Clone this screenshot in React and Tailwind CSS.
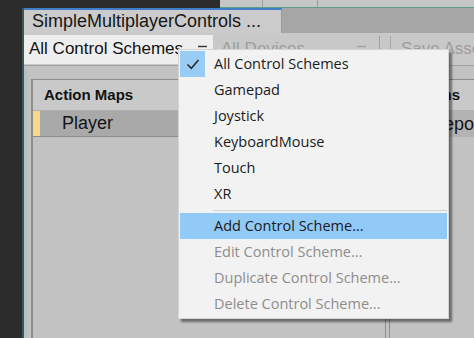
const MENU_ITEMS = [
  { label: 'All Control Schemes', checked: true },
  { label: 'Gamepad' },
  { label: 'Joystick' },
  { label: 'KeyboardMouse' },
  { label: 'Touch' },
  { label: 'XR' },
  { separator: true },
  { label: 'Add Control Scheme...', active: true },
  { label: 'Edit Control Scheme...', disabled: true },
  { label: 'Duplicate Control Scheme...', disabled: true },
  { label: 'Delete Control Scheme...', disabled: true },
]

const ui = { fontFamily: '"Liberation Sans", Arial, sans-serif' }
const menuFont = { fontFamily: '"Open Sans", "Noto Sans", sans-serif' }

function DropArrow({ color = '#333' }) {
  return (
    <svg width="11" height="8" viewBox="0 0 11 8" className="shrink-0">
      <path d="M1 1.5h9" stroke={color} strokeWidth="1.4" />
      <path d="M2 4l3.5 3.5L9 4z" fill={color} />
    </svg>
  )
}

function Check() {
  return (
    <svg width="14" height="12" viewBox="0 0 14 12">
      <path d="M1.5 6.5l3.8 3.8L12.5 2" fill="none" stroke="#2a2a2a" strokeWidth="1.6" />
    </svg>
  )
}

function Menu() {
  return (
    <div
      className="absolute left-[178px] top-[49px] w-[271px] bg-[#f2f2f2] pt-[1px] pb-[1px] px-[1px] shadow-[3px_3px_2px_rgba(0,0,0,0.45)] border border-[#d4d4d4]"
      style={menuFont}
    >
      {MENU_ITEMS.map((item, i) =>
        item.separator ? (
          <div key={i} className="h-[6px] flex items-center pl-[33px]">
            <div className="w-full h-[1px] bg-[#d2d2d2]" />
          </div>
        ) : (
          <div
            key={i}
            className={`h-[26px] flex items-center text-[14.5px] ${item.active ? 'bg-[#91c9f7]' : ''} ${item.disabled ? 'text-[#8d8d8d]' : 'text-[#1b1b1b]'}`}
          >
            <div className={`w-[25px] h-full flex items-center justify-center ${item.checked ? 'bg-[#99ccf5]' : ''}`}>
              {item.checked && <Check />}
            </div>
            <span className="pl-[9px] whitespace-nowrap">{item.label}</span>
          </div>
        )
      )}
    </div>
  )
}

export default function App() {
  return (
    <div className="relative w-[474px] h-[338px] overflow-hidden bg-[#2c2c2c] flex flex-col" style={ui}>
      {/* strip of the window above */}
      <div className="h-[8px] flex shrink-0">
        <div className="w-[220px] bg-[#2c2c2c]" />
        <div className="flex-1 bg-[#c6c6c6] flex border-b border-[#5f9f82] overflow-hidden">
          <div className="w-[43px] border-r border-[#9c9c9c]" />
          <div className="w-[55px] border-r border-[#9c9c9c]" />
          <div className="pl-[30px] -mt-[16px] text-[18px] text-[#111] whitespace-nowrap leading-none">AssetName</div>
        </div>
      </div>

      <div className="flex-1 flex">
        <div className="w-[22px] bg-[#2c2c2c] shrink-0" />
        <div className="flex-1 flex flex-col border-l-[2px] border-[#3b5757]">
          {/* tab bar */}
          <div className="h-[25px] flex shrink-0 bg-[#a6a6a6]">
            <div className="w-[258px] bg-[#cbcbcb] border-t-2 border-[#3e7dc8] border-r border-r-[#9a9a9a] flex items-center pl-[8px] text-[18px] text-[#161616] whitespace-nowrap">
              SimpleMultiplayerControls ...
            </div>
          </div>

          {/* toolbar */}
          <div className="h-[33px] shrink-0 bg-[#c8c8c8] border-b border-[#a3a3a3] flex items-center gap-[4px] text-[17px]">
            <div className="w-[189px] h-[29px] bg-[#eeeeee] flex items-center justify-between pl-[5px] pr-[5px] text-[#121212]">
              <span className="whitespace-nowrap">All Control Schemes</span>
              <DropArrow />
            </div>
            <div className="w-[158px] h-[29px] flex items-center justify-between pl-[4px] pr-[8px] text-[#9d9d9d]">
              <span className="whitespace-nowrap">All Devices</span>
              <DropArrow color="#a0a0a0" />
            </div>
            <div className="w-[1px] h-[26px] bg-[#a0a0a0]" />
            <div className="w-[1px] h-[26px] bg-[#a8a8a8] ml-[6px]" />
            <span className="pl-[6px] text-[#9d9d9d] whitespace-nowrap">Save Asset</span>
          </div>

          {/* panels */}
          <div className="flex-1 bg-[#c2c2c2] flex pt-[13px] pl-[4px] gap-[3px] border-l-[3px] border-[#b7c1c1]">
            <div className="w-[355px] flex flex-col border-l-[2px] border-t border-r border-[#8e8e8e]">
              <div className="h-[31px] bg-[#c9c9c9] flex items-center pl-[11px] text-[15px] font-bold text-[#121212] border-b border-[#b0b0b0]">
                Action Maps
              </div>
              <div className="h-[26px] bg-[#a9a9a9] flex items-center border-b border-[#8c8c8c]">
                <div className="w-[7px] h-full bg-[#f7da89]" />
                <span className="pl-[22px] text-[18px] text-[#141414]">Player</span>
              </div>
              <div className="flex-1" />
            </div>
            <div className="flex-1 flex flex-col border-l border-t border-[#8e8e8e]">
              <div className="h-[31px] bg-[#c9c9c9] flex items-center pl-[15px] text-[15px] font-bold text-[#121212] border-b border-[#b0b0b0] whitespace-nowrap">
                Actions
              </div>
              <div className="h-[26px] bg-[#b3b3b3] flex items-center pl-[41px] text-[18px] text-[#141414] whitespace-nowrap">
                Report
              </div>
              <div className="flex-1" />
            </div>
          </div>
        </div>
      </div>

      <Menu />
    </div>
  )
}
